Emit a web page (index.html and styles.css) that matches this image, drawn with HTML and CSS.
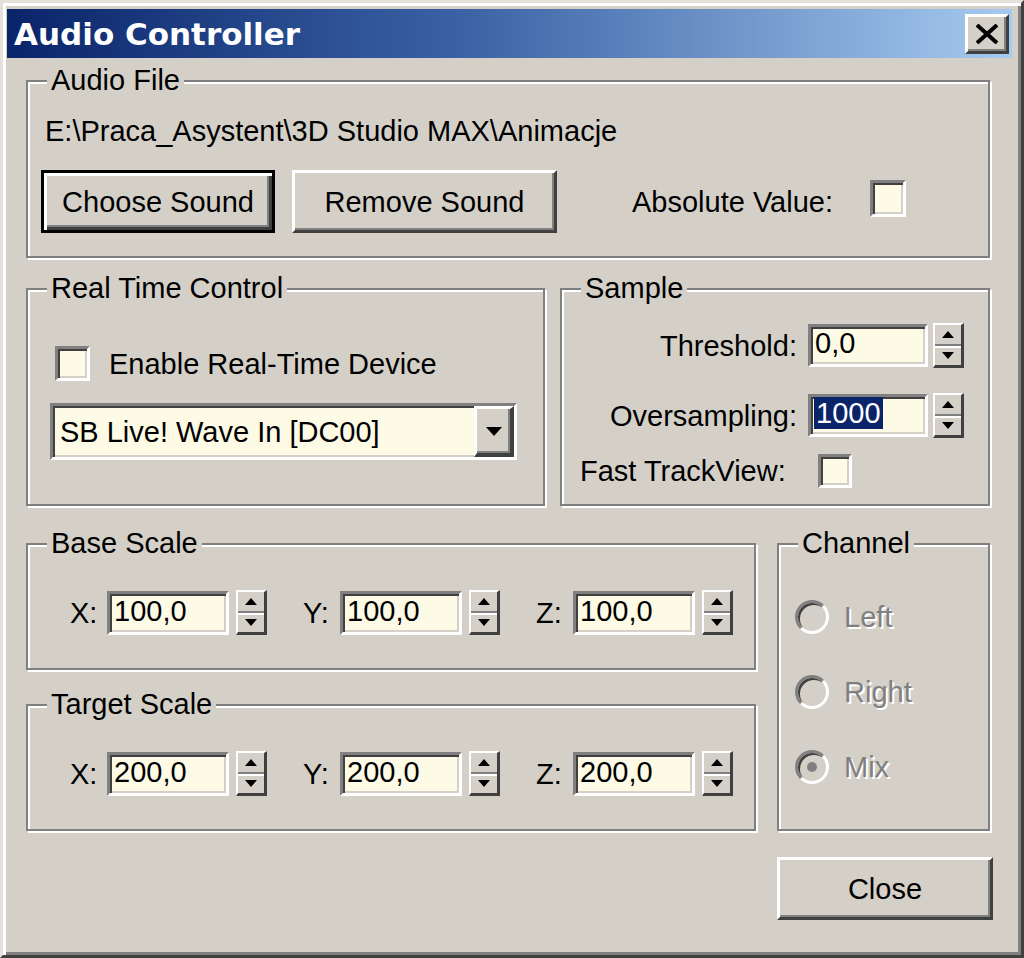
FILE: index.html
```html
<html>
  <head>
    <link rel="stylesheet" href="styles.css">
  </head>
  <body>
    <div class="window">
      <div class="titlebar">
        <span class="title">Audio Controller</span>
        <button class="raised title-close" type="button">
          <svg width="24" height="20" viewBox="0 0 24 20"><path d="M2 1 L22 19 M22 1 L2 19" stroke="#000" stroke-width="4"/></svg>
        </button>
      </div>

      <div class="content">
        <!-- Audio File -->
        <div class="group audio-file">
          <span class="legend">Audio File</span>
          <div class="path">E:\Praca_Asystent\3D Studio MAX\Animacje</div>
          <div class="file-row">
            <button class="btn default btn-choose" type="button">Choose Sound</button>
            <button class="btn raised btn-remove" type="button">Remove Sound</button>
            <span class="abs-label">Absolute Value:</span>
            <span class="sunken check abs-check"></span>
          </div>
        </div>

        <div class="mid">
          <!-- Real Time Control -->
          <div class="group rtc">
            <span class="legend">Real Time Control</span>
            <div class="check-row">
              <span class="sunken check"></span>
              <span class="check-text">Enable Real-Time Device</span>
            </div>
            <div class="sunken combo">
              <span class="combo-text">SB Live! Wave In [DC00]</span>
              <span class="raised combo-btn">
                <svg width="16" height="9" viewBox="0 0 16 9"><path d="M0 0 H16 L8 9 Z" fill="#000"/></svg>
              </span>
            </div>
          </div>

          <!-- Sample -->
          <div class="group sample">
            <span class="legend">Sample</span>
            <div class="sample-row row-threshold">
              <span class="sample-label">Threshold:</span>
              <span class="sunken edit">0,0</span>
              <span class="spin">
                <span class="spin-half up"><svg width="12" height="7" viewBox="0 0 12 7"><path d="M0 7 L6 0 L12 7 Z" fill="#000"/></svg></span>
                <span class="spin-half"><svg width="12" height="7" viewBox="0 0 12 7"><path d="M0 0 L12 0 L6 7 Z" fill="#000"/></svg></span>
              </span>
            </div>
            <div class="sample-row row-over">
              <span class="sample-label">Oversampling:</span>
              <span class="sunken edit"><span class="selected">1000</span></span>
              <span class="spin">
                <span class="spin-half up"><svg width="12" height="7" viewBox="0 0 12 7"><path d="M0 7 L6 0 L12 7 Z" fill="#000"/></svg></span>
                <span class="spin-half"><svg width="12" height="7" viewBox="0 0 12 7"><path d="M0 0 L12 0 L6 7 Z" fill="#000"/></svg></span>
              </span>
            </div>
            <div class="sample-row row-fast">
              <span class="sample-label left">Fast TrackView:</span>
              <span class="sunken check fast-check"></span>
            </div>
          </div>
        </div>

        <div class="bottom">
          <div class="scales">
            <!-- Base Scale -->
            <div class="group scale">
              <span class="legend">Base Scale</span>
              <div class="xyz-row">
                <div class="unit">
                  <span class="axis">X:</span>
                  <span class="sunken edit edit-xyz">100,0</span>
                  <span class="spin">
                    <span class="spin-half up"><svg width="12" height="7" viewBox="0 0 12 7"><path d="M0 7 L6 0 L12 7 Z" fill="#000"/></svg></span>
                    <span class="spin-half"><svg width="12" height="7" viewBox="0 0 12 7"><path d="M0 0 L12 0 L6 7 Z" fill="#000"/></svg></span>
                  </span>
                </div>
                <div class="unit">
                  <span class="axis">Y:</span>
                  <span class="sunken edit edit-xyz">100,0</span>
                  <span class="spin">
                    <span class="spin-half up"><svg width="12" height="7" viewBox="0 0 12 7"><path d="M0 7 L6 0 L12 7 Z" fill="#000"/></svg></span>
                    <span class="spin-half"><svg width="12" height="7" viewBox="0 0 12 7"><path d="M0 0 L12 0 L6 7 Z" fill="#000"/></svg></span>
                  </span>
                </div>
                <div class="unit">
                  <span class="axis">Z:</span>
                  <span class="sunken edit edit-xyz">100,0</span>
                  <span class="spin">
                    <span class="spin-half up"><svg width="12" height="7" viewBox="0 0 12 7"><path d="M0 7 L6 0 L12 7 Z" fill="#000"/></svg></span>
                    <span class="spin-half"><svg width="12" height="7" viewBox="0 0 12 7"><path d="M0 0 L12 0 L6 7 Z" fill="#000"/></svg></span>
                  </span>
                </div>
              </div>
            </div>

            <!-- Target Scale -->
            <div class="group scale">
              <span class="legend">Target Scale</span>
              <div class="xyz-row">
                <div class="unit">
                  <span class="axis">X:</span>
                  <span class="sunken edit edit-xyz">200,0</span>
                  <span class="spin">
                    <span class="spin-half up"><svg width="12" height="7" viewBox="0 0 12 7"><path d="M0 7 L6 0 L12 7 Z" fill="#000"/></svg></span>
                    <span class="spin-half"><svg width="12" height="7" viewBox="0 0 12 7"><path d="M0 0 L12 0 L6 7 Z" fill="#000"/></svg></span>
                  </span>
                </div>
                <div class="unit">
                  <span class="axis">Y:</span>
                  <span class="sunken edit edit-xyz">200,0</span>
                  <span class="spin">
                    <span class="spin-half up"><svg width="12" height="7" viewBox="0 0 12 7"><path d="M0 7 L6 0 L12 7 Z" fill="#000"/></svg></span>
                    <span class="spin-half"><svg width="12" height="7" viewBox="0 0 12 7"><path d="M0 0 L12 0 L6 7 Z" fill="#000"/></svg></span>
                  </span>
                </div>
                <div class="unit">
                  <span class="axis">Z:</span>
                  <span class="sunken edit edit-xyz">200,0</span>
                  <span class="spin">
                    <span class="spin-half up"><svg width="12" height="7" viewBox="0 0 12 7"><path d="M0 7 L6 0 L12 7 Z" fill="#000"/></svg></span>
                    <span class="spin-half"><svg width="12" height="7" viewBox="0 0 12 7"><path d="M0 0 L12 0 L6 7 Z" fill="#000"/></svg></span>
                  </span>
                </div>
              </div>
            </div>
          </div>

          <div class="side">
            <!-- Channel -->
            <div class="group channel">
              <span class="legend">Channel</span>
              <div class="radio-row first">
                <span class="radio"></span>
                <span class="radio-text">Left</span>
              </div>
              <div class="radio-row">
                <span class="radio"></span>
                <span class="radio-text">Right</span>
              </div>
              <div class="radio-row">
                <span class="radio"><span class="dot"></span></span>
                <span class="radio-text">Mix</span>
              </div>
            </div>
            <button class="btn raised btn-close" type="button">Close</button>
          </div>
        </div>
      </div>
    </div>
  </body>
</html>
```

FILE: styles.css
```css
* {
  box-sizing: border-box;
}

body {
  margin: 0;
  background: #d4d0c8;
  font-family: "Liberation Sans", Arial, sans-serif;
  font-size: 29px;
  line-height: 34px;
  color: #000;
}

/* window frame */
.window {
  width: 1024px;
  height: 958px;
  border: 3px solid;
  border-color: #e4e1da #404040 #404040 #e4e1da;
  box-shadow: inset 3px 3px #fff, inset -3px -3px #808080;
  padding: 6px 9px 0 4px;
  background: #d4d0c8;
}

.titlebar {
  display: flex;
  align-items: center;
  height: 49px;
  padding-left: 7px;
  background: linear-gradient(to right, #0a246a, #3a62a4 45%, #a6caf0);
}

.title {
  flex: 1;
  font-family: "DejaVu Sans", Verdana, sans-serif;
  font-weight: bold;
  font-size: 31px;
  color: #fff;
}

.title-close {
  width: 44px;
  height: 40px;
  margin-right: 3px;
  padding: 0;
  display: flex;
  align-items: center;
  justify-content: center;
}

/* 3d edges */
.raised {
  background: #d4d0c8;
  border: 3px solid;
  border-color: #fff #404040 #404040 #fff;
  box-shadow: inset -2px -2px #808080;
}

.sunken {
  background: #fdfae6;
  border: 3px solid;
  border-color: #808080 #fff #fff #808080;
  box-shadow: inset 2px 2px #404040, inset -2px -2px #d4d0c8;
}

/* etched group box */
.group {
  border: 2px solid #808080;
  box-shadow: inset 2px 2px #fff, 2px 2px #fff;
}

.legend {
  display: table;
  margin: -19px 0 0 19px;
  padding: 0 4px;
  background: #d4d0c8;
}

.content {
  padding: 22px 22px 0 19px;
}

/* buttons */
.btn {
  height: 63px;
  padding: 0;
  font: inherit;
  color: #000;
}

.default {
  background: #d4d0c8;
  border: 3px solid #000;
  box-shadow: inset 3px 3px #fff, inset -3px -3px #404040, inset -5px -5px #808080;
}

/* audio file */
.audio-file {
  height: 178px;
}

.path {
  margin: 17px 0 0 17px;
}

.file-row {
  display: flex;
  align-items: center;
  margin: 22px 0 0 13px;
}

.btn-choose {
  width: 234px;
}

.btn-remove {
  width: 265px;
  margin-left: 17px;
}

.abs-label {
  margin-left: 75px;
}

.check {
  width: 35px;
  height: 35px;
}

.abs-check {
  width: 36px;
  height: 37px;
  margin: 0 0 6px 37px;
}

/* middle row */
.mid {
  display: flex;
  gap: 15px;
  margin-top: 30px;
}

.rtc {
  width: 519px;
  height: 218px;
}

.check-row {
  display: flex;
  align-items: center;
  margin: 41px 0 0 27px;
}

.check-text {
  margin-left: 19px;
}

.combo {
  display: flex;
  align-items: stretch;
  width: 467px;
  height: 57px;
  margin: 22px 0 0 22px;
}

.combo-text {
  flex: 1;
  padding-left: 7px;
  align-self: center;
}

.combo-btn {
  width: 40px;
  display: flex;
  align-items: center;
  justify-content: center;
  border-right-width: 4px;
  border-bottom-width: 4px;
}

.sample {
  width: 430px;
  height: 218px;
}

.sample-row {
  display: flex;
  align-items: center;
  margin-left: 18px;
}

.row-threshold {
  margin-top: 18px;
}

.row-over {
  margin-top: 25px;
}

.row-fast {
  margin-top: 16px;
}

.sample-label {
  width: 217px;
  text-align: right;
}

.sample-label.left {
  text-align: left;
}

.edit {
  width: 120px;
  height: 43px;
  margin-left: 11px;
  padding-left: 4px;
  line-height: 33px;
}

.selected {
  margin-left: -1px;
  padding: 0 2px;
  background: #0a246a;
  color: #fff;
}

.fast-check {
  width: 34px;
  height: 34px;
  margin-left: 21px;
}

/* spinner */
.spin {
  display: flex;
  flex-direction: column;
  width: 31px;
  height: 45px;
  margin-left: 5px;
  background: #d4d0c8;
  border: 2px solid;
  border-color: #fff #404040 #404040 #fff;
  border-right-width: 3px;
  border-bottom-width: 3px;
}

.spin-half {
  flex: 1;
  display: flex;
  align-items: center;
  justify-content: center;
}

.spin-half.up {
  border-bottom: 2px solid #808080;
  box-shadow: 0 2px #fff;
}

/* bottom area */
.bottom {
  display: flex;
  gap: 21px;
  margin-top: 37px;
}

.scales {
  display: flex;
  flex-direction: column;
  gap: 34px;
  width: 730px;
  flex-shrink: 0;
}

.scale {
  height: 127px;
}

.xyz-row {
  display: flex;
  gap: 36px;
  margin: 30px 0 0 42px;
}

.unit {
  display: flex;
  align-items: center;
}

.axis {
  width: 30px;
}

.edit-xyz {
  width: 122px;
  height: 44px;
  margin-left: 7px;
  line-height: 34px;
}

.unit .spin {
  margin-left: 7px;
}

.side {
  display: flex;
  flex-direction: column;
  width: 213px;
  flex-shrink: 0;
}

.channel {
  width: 213px;
  height: 288px;
}

.radio-row {
  display: flex;
  align-items: center;
  margin: 41px 0 0 16px;
}

.radio-row.first {
  margin-top: 40px;
}

.radio {
  display: flex;
  align-items: center;
  justify-content: center;
  width: 34px;
  height: 34px;
  border-radius: 50%;
  border: 3px solid;
  border-color: #808080 #fff #fff #808080;
  box-shadow: inset 2px 2px #404040;
  background: #d4d0c8;
}

.dot {
  width: 10px;
  height: 10px;
  border-radius: 50%;
  background: #808080;
}

.radio-text {
  margin-left: 15px;
  color: #808080;
  text-shadow: 2px 2px 0 #fff;
}

.btn-close {
  width: 216px;
  margin-top: 26px;
}
```
